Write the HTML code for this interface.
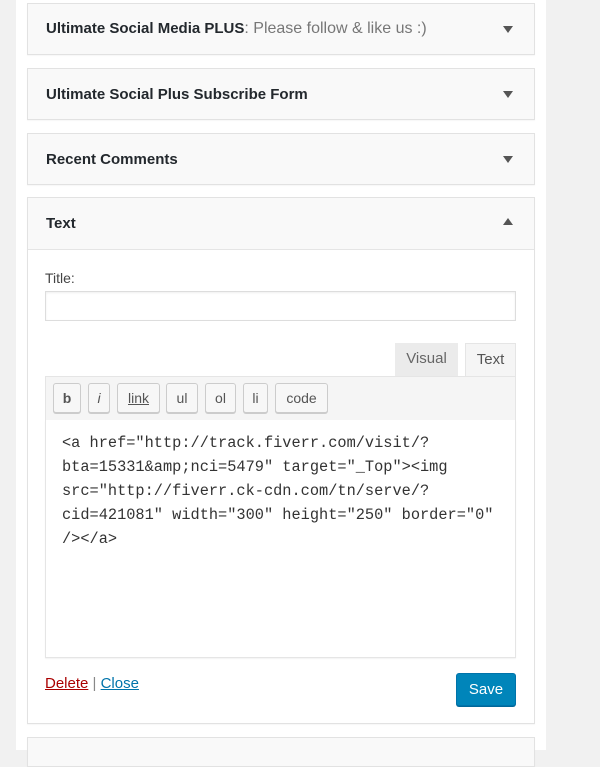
<!DOCTYPE html>
<html><head><style>
*{box-sizing:border-box;margin:0;padding:0}
body{width:600px;height:750px;background:#f1f1f1;font-family:"Liberation Sans",sans-serif;position:relative;overflow:hidden}
.col{position:absolute;left:16px;top:0;width:530px;height:750px;background:#fff}
.box{position:absolute;left:27px;width:508px;background:#f9f9f9;border:1px solid #e2e2e2;box-shadow:0 1px 1px rgba(0,0,0,.04)}
.h{position:absolute;left:18px;font-size:15px;font-weight:bold;color:#23282d}
.arr{position:absolute;right:21px;width:0;height:0;border-left:5px solid transparent;border-right:5px solid transparent}
.dn{border-top:7px solid #555}
.up{border-bottom:7px solid #555}
.btn{position:absolute;top:383px;height:30px;background:#f7f7f7;border:1px solid #ccc;border-radius:3px;box-shadow:0 1px 0 #ccc;font-size:14px;color:#555;text-align:center;line-height:28px}
pre{position:absolute;left:62px;top:431px;font-family:"Liberation Mono",monospace;font-size:15.3px;line-height:24px;color:#333}
</style></head><body>
<div class="col"></div>
<div class="box" style="top:3px;height:52px"><div class="h" style="top:16px">Ultimate Social Media PLUS<span style="font-weight:normal;color:#777;font-size:16px">: Please follow &amp; like us :)</span></div><div class="arr dn" style="top:22px"></div></div>
<div class="box" style="top:68px;height:52px"><div class="h" style="top:17px">Ultimate Social Plus Subscribe Form</div><div class="arr dn" style="top:22px"></div></div>
<div class="box" style="top:133px;height:52px"><div class="h" style="top:17px">Recent Comments</div><div class="arr dn" style="top:22px"></div></div>
<div class="box" style="top:197px;height:527px;background:#fff">
<div style="height:52px;background:#f9f9f9;border-bottom:1px solid #e5e5e5;position:relative"><div class="h" style="top:17px">Text</div><div class="arr up" style="top:20px"></div></div>
</div>
<div style="position:absolute;left:45px;top:270px;font-size:14px;color:#444">Title:</div>
<div style="position:absolute;left:45px;top:291px;width:471px;height:30px;border:1px solid #ddd;box-shadow:inset 0 1px 2px rgba(0,0,0,.07);background:#fff"></div>
<div style="position:absolute;left:395px;top:343px;width:63px;height:33px;background:#ebebeb;font-size:15px;color:#666;text-align:center;line-height:32px">Visual</div>
<div style="position:absolute;left:465px;top:343px;width:51px;height:34px;background:#f5f5f5;border:1px solid #e5e5e5;border-bottom:none;font-size:15px;color:#555;text-align:center;line-height:32px">Text</div>
<div style="position:absolute;left:45px;top:376px;width:471px;height:45px;background:#f5f5f5;border:1px solid #e5e5e5"></div>
<div class="btn" style="left:53px;width:28px;font-weight:bold">b</div>
<div class="btn" style="left:88px;width:22px;font-style:italic">i</div>
<div class="btn" style="left:117px;width:43px;text-decoration:underline">link</div>
<div class="btn" style="left:166px;width:32px">ul</div>
<div class="btn" style="left:205px;width:31px">ol</div>
<div class="btn" style="left:243px;width:25px">li</div>
<div class="btn" style="left:275px;width:53px">code</div>
<div style="position:absolute;left:45px;top:420px;width:471px;height:238px;background:#fff;border:1px solid #e5e5e5;border-top:none;box-shadow:0 1px 1px rgba(0,0,0,.05)"></div>
<pre>&lt;a href="http://track.fiverr.com/visit/?
bta=15331&amp;amp;nci=5479" target="_Top"&gt;&lt;img
src="http://fiverr.ck-cdn.com/tn/serve/?
cid=421081" width="300" height="250" border="0"
/&gt;&lt;/a&gt;</pre>
<div style="position:absolute;left:45px;top:675px;font-size:15px;color:#888"><span style="color:#a00;text-decoration:underline">Delete</span> | <span style="color:#0073aa;text-decoration:underline">Close</span></div>
<div style="position:absolute;left:456px;top:673px;width:60px;height:33px;background:#0085ba;border:1px solid #0073aa;border-radius:3px;box-shadow:0 1px 0 #006799;color:#fff;font-size:15px;text-align:center;line-height:31px">Save</div>
<div class="box" style="top:737px;height:30px"></div>
</body></html>
